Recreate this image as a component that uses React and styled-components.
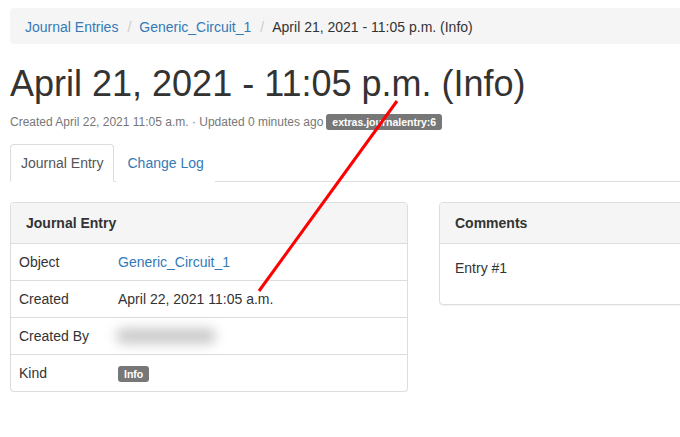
import styled, { createGlobalStyle } from "styled-components";

const GlobalStyle = createGlobalStyle`
  html, body {
    margin: 0;
    padding: 0;
    background: #fff;
    overflow: hidden;
  }
  body {
    font-family: "Liberation Sans", Arial, sans-serif;
    font-size: 14px;
    line-height: 1.42857;
    color: #333;
  }
  a {
    color: #337ab7;
    text-decoration: none;
  }
`;

const Page = styled.div`
  position: relative;
  width: 1040px;
  padding: 8px 10px 0;
`;

const Breadcrumb = styled.ol`
  display: flex;
  list-style: none;
  margin: 0 0 20px;
  padding: 10px 15px 6px;
  background: #f5f5f5;
  border-radius: 4px;
  li + li::before {
    content: "/";
    color: #ccc;
    padding: 0 8px 0 9px;
  }
  li.active {
    color: #333;
  }
`;

const Title = styled.h1`
  margin: 20px 0 10px;
  font-size: 36px;
  font-weight: 500;
  line-height: 1.1;
  color: #333;
`;

const Meta = styled.p`
  margin: 0 0 13px;
  font-size: 12px;
  line-height: 17px;
  color: #777;
  display: flex;
  align-items: center;
  gap: 3px;
`;

const Label = styled.span`
  display: inline-block;
  background: #777;
  color: #fff;
  font-weight: 700;
  font-size: 10.5px;
  line-height: 1;
  padding: 3px 6px 3px;
  border-radius: 3px;
`;

const Tabs = styled.ul`
  display: flex;
  list-style: none;
  margin: 0 0 20px;
  padding: 0;
  border-bottom: 1px solid #ddd;
`;

const Tab = styled.li`
  margin-bottom: -1px;
  margin-right: 2px;
  a {
    display: block;
    padding: 8px 10px;
    line-height: 20px;
    border: 1px solid ${(p) => (p.active ? "#ddd" : "transparent")};
    border-bottom-color: ${(p) => (p.active ? "#fff" : "transparent")};
    border-radius: 4px 4px 0 0;
    background: #fff;
    color: ${(p) => (p.active ? "#555" : "#337ab7")};
  }
`;

const Row = styled.div`
  display: grid;
  grid-template-columns: 398px 1fr;
  gap: 31px;
  align-items: start;
`;

const Panel = styled.div`
  border: 1px solid #ddd;
  border-radius: 4px;
  box-shadow: 0 1px 1px rgba(0, 0, 0, 0.05);
  background: #fff;
`;

const PanelHeading = styled.div`
  padding: 10px 15px;
  background: #f5f5f5;
  border-bottom: 1px solid #ddd;
  border-radius: 3px 3px 0 0;
  font-weight: 700;
  line-height: 20px;
`;

const PanelBody = styled.div`
  padding: 15px 15px 25px;
`;

const Table = styled.table`
  width: 100%;
  table-layout: fixed;
  border-collapse: collapse;
  td {
    padding: 8px;
    line-height: 20px;
    vertical-align: top;
  }
  tr + tr td {
    border-top: 1px solid #ddd;
  }
  td:first-child {
    width: 83px;
  }
`;

const Blurred = styled.div`
  width: 100px;
  height: 16px;
  margin: 2px 0 2px -2px;
  background: #cbcbcb;
  border-radius: 8px;
  filter: blur(6px);
`;

const Overlay = styled.svg`
  position: absolute;
  left: 0;
  top: 0;
  width: 680px;
  height: 437px;
  pointer-events: none;
`;

export default function App() {
  return (
    <>
      <GlobalStyle />
      <Page>
        <Breadcrumb>
          <li><a href="#">Journal Entries</a></li>
          <li><a href="#">Generic_Circuit_1</a></li>
          <li className="active">April 21, 2021 - 11:05 p.m. (Info)</li>
        </Breadcrumb>
        <Title>April 21, 2021 - 11:05 p.m. (Info)</Title>
        <Meta>
          Created April 22, 2021 11:05 a.m. · Updated 0 minutes ago
          <Label>extras.journalentry:6</Label>
        </Meta>
        <Tabs>
          <Tab active><a href="#">Journal Entry</a></Tab>
          <Tab><a href="#">Change Log</a></Tab>
        </Tabs>
        <Row>
          <Panel>
            <PanelHeading>Journal Entry</PanelHeading>
            <Table>
              <tbody>
                <tr>
                  <td>Object</td>
                  <td><a href="#">Generic_Circuit_1</a></td>
                </tr>
                <tr>
                  <td>Created</td>
                  <td>April 22, 2021 11:05 a.m.</td>
                </tr>
                <tr>
                  <td>Created By</td>
                  <td><Blurred /></td>
                </tr>
                <tr>
                  <td>Kind</td>
                  <td><Label>Info</Label></td>
                </tr>
              </tbody>
            </Table>
          </Panel>
          <Panel>
            <PanelHeading>Comments</PanelHeading>
            <PanelBody>Entry #1</PanelBody>
          </Panel>
        </Row>
        <Overlay viewBox="0 0 680 437">
          <line x1="397" y1="101" x2="259" y2="291" stroke="#f00" strokeWidth="3" />
        </Overlay>
      </Page>
    </>
  );
}
